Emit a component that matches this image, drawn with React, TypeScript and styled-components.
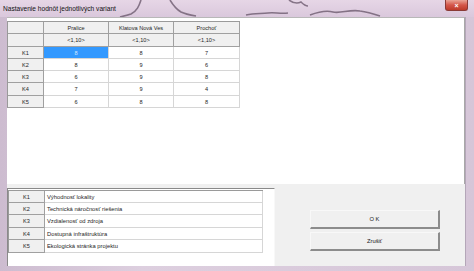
import { Fragment } from "react";
import styled, { createGlobalStyle } from "styled-components";

const GlobalStyle = createGlobalStyle`
  html, body {
    margin: 0;
    padding: 0;
    width: 474px;
    height: 271px;
    overflow: hidden;
    background: #d8c8da;
  }
`;

const Window = styled.div`
  width: 474px;
  height: 271px;
  display: flex;
  flex-direction: column;
  background: linear-gradient(90deg, #cdbcd0 0%, #ddcfdf 30%, #d6c6d8 100%);
  font-family: "Liberation Sans", Arial, sans-serif;
  font-size: 5.8px;
  color: #222;
`;

const TitleBar = styled.div`
  position: relative;
  height: 17px;
  display: flex;
  align-items: flex-start;
  background: linear-gradient(180deg, #e6d6e6 0%, #dac8dc 100%);
`;

const Wallpaper = styled.svg`
  position: absolute;
  left: 0;
  top: 0;
`;

const Title = styled.span`
  position: relative;
  margin: 5px 0 0 3px;
  font-size: 6.6px;
  color: #111;
`;

const CloseButton = styled.div`
  position: relative;
  margin: 0 6px 0 auto;
  width: 21px;
  height: 10px;
  border-radius: 0 0 3px 3px;
  background: linear-gradient(180deg, #eaa496 0%, #d4574a 50%, #bd3a2a 100%);
  border: 1px solid #8a3a36;
  border-top: none;
  display: flex;
  align-items: center;
  justify-content: center;
  color: #fff;
  font-size: 7px;
  font-weight: bold;
`;

const Body = styled.div`
  flex: 1;
  margin: 0 8px 5px 7px;
  display: flex;
  flex-direction: column;
  border-right: 1px solid #b4a6b8;
`;

const UpperPanel = styled.div`
  height: 167px;
  box-sizing: border-box;
  background: #fff;
  border-top: 1px solid #b8b8b8;
  border-right: 1px solid #a8a8a8;
  padding-top: 3px;
`;

const LowerArea = styled.div`
  flex: 1;
  display: flex;
  align-items: flex-start;
  background: #f0f0f0;
  padding-top: 4px;
`;

const Grid = styled.div<{ $cols: string; $rows: string }>`
  display: grid;
  width: max-content;
  grid-template-columns: ${(p) => p.$cols};
  grid-template-rows: ${(p) => p.$rows};
  border-left: 1px solid #9a9a9a;
  border-top: 1px solid #9a9a9a;
`;

const Cell = styled.div<{ $kind: "head" | "data" | "text"; $selected?: boolean }>`
  box-sizing: border-box;
  display: flex;
  align-items: center;
  justify-content: ${(p) => (p.$kind === "text" ? "flex-start" : "center")};
  padding-left: ${(p) => (p.$kind === "text" ? "2px" : "0")};
  white-space: nowrap;
  overflow: hidden;
  font-size: ${(p) => (p.$kind === "text" ? "5.8px" : "5.6px")};
  background: ${(p) =>
    p.$selected ? "#3399ff" : p.$kind === "head" ? "#f0f0f0" : "#fff"};
  color: ${(p) => (p.$selected ? "#d4e9ff" : "#262626")};
  border-right: 1px solid
    ${(p) => (p.$kind === "head" ? "#a0a0a0" : "#d6d6d6")};
  border-bottom: 1px solid
    ${(p) => (p.$kind === "head" ? "#a0a0a0" : "#d6d6d6")};
`;

const ListBox = styled.div`
  width: 268px;
  height: 78px;
  box-sizing: border-box;
  background: #fff;
  border-top: 1px solid #8a8a8a;
  border-left: 1px solid #8a8a8a;
  border-right: 1px solid #f8f8f8;
  padding: 1px 0 0 0;
`;

const ButtonColumn = styled.div`
  margin: 22px 0 0 35px;
  display: flex;
  flex-direction: column;
  gap: 3px;
`;

const Button = styled.div`
  width: 130px;
  height: 19px;
  box-sizing: border-box;
  display: flex;
  align-items: center;
  justify-content: center;
  background: #f0f0f0;
  border-top: 1px solid #f8f8f8;
  border-left: 1px solid #f8f8f8;
  border-right: 2px solid #8c8c8c;
  border-bottom: 2px solid #8c8c8c;
  color: #222;
`;

const variants = ["Pralice", "Klatova Nová Ves", "Prochoť"];
const values = [
  [8, 8, 7],
  [8, 9, 6],
  [6, 9, 8],
  [7, 9, 4],
  [6, 8, 8],
];
const criteria = [
  "Výhodnosť lokality",
  "Technická náročnosť riešenia",
  "Vzdialenosť od zdroja",
  "Dostupná infraštruktúra",
  "Ekologická stránka projektu",
];

function App() {
  return (
    <>
      <GlobalStyle />
      <Window>
        <TitleBar>
          <Wallpaper width="474" height="17" viewBox="0 0 474 17">
            <g fill="none" stroke="#5e4c60" strokeWidth="1.6" opacity="0.7">
              <path d="M141 0 C139 6 137 11 131 14 C128 15 124 16 120 17" />
              <path d="M170 0 C173 5 176 9 181 12 C185 14 190 15 196 16" />
              <path d="M246 15 C255 13 262 14 268 13 C274 12 280 14 288 13" />
              <path d="M289 0 C293 3 297 4 301 2 C303 4 305 6 308 6" />
              <path d="M310 15 C318 12 326 10 333 12 C340 14 350 9 360 11 C368 12 374 14 380 16" />
            </g>
          </Wallpaper>
          <Title>Nastavenie hodnôt jednotlivých variant</Title>
          <CloseButton>×</CloseButton>
        </TitleBar>
        <Body>
          <UpperPanel>
            <Grid
              $cols="36px 65px 65px 66px"
              $rows="12px 13px 12px 12px 12px 13px 12px"
            >
              <Cell $kind="head" />
              {variants.map((v) => (
                <Cell key={v} $kind="head">
                  {v}
                </Cell>
              ))}
              <Cell $kind="head" />
              {variants.map((v) => (
                <Cell key={`r-${v}`} $kind="head">
                  {"<1,10>"}
                </Cell>
              ))}
              {values.map((row, i) => (
                <Fragment key={i}>
                  <Cell $kind="head">K{i + 1}</Cell>
                  {row.map((n, j) => (
                    <Cell key={j} $kind="data" $selected={i === 0 && j === 0}>
                      {n}
                    </Cell>
                  ))}
                </Fragment>
              ))}
            </Grid>
          </UpperPanel>
          <LowerArea>
            <ListBox>
              <Grid $cols="36px 218px" $rows="12px 12px 13px 12px 13px">
                {criteria.map((c, i) => (
                  <Fragment key={i}>
                    <Cell $kind="head">K{i + 1}</Cell>
                    <Cell $kind="text">{c}</Cell>
                  </Fragment>
                ))}
              </Grid>
            </ListBox>
            <ButtonColumn>
              <Button>O K</Button>
              <Button>Zrušiť</Button>
            </ButtonColumn>
          </LowerArea>
        </Body>
      </Window>
    </>
  );
}

export default App;
